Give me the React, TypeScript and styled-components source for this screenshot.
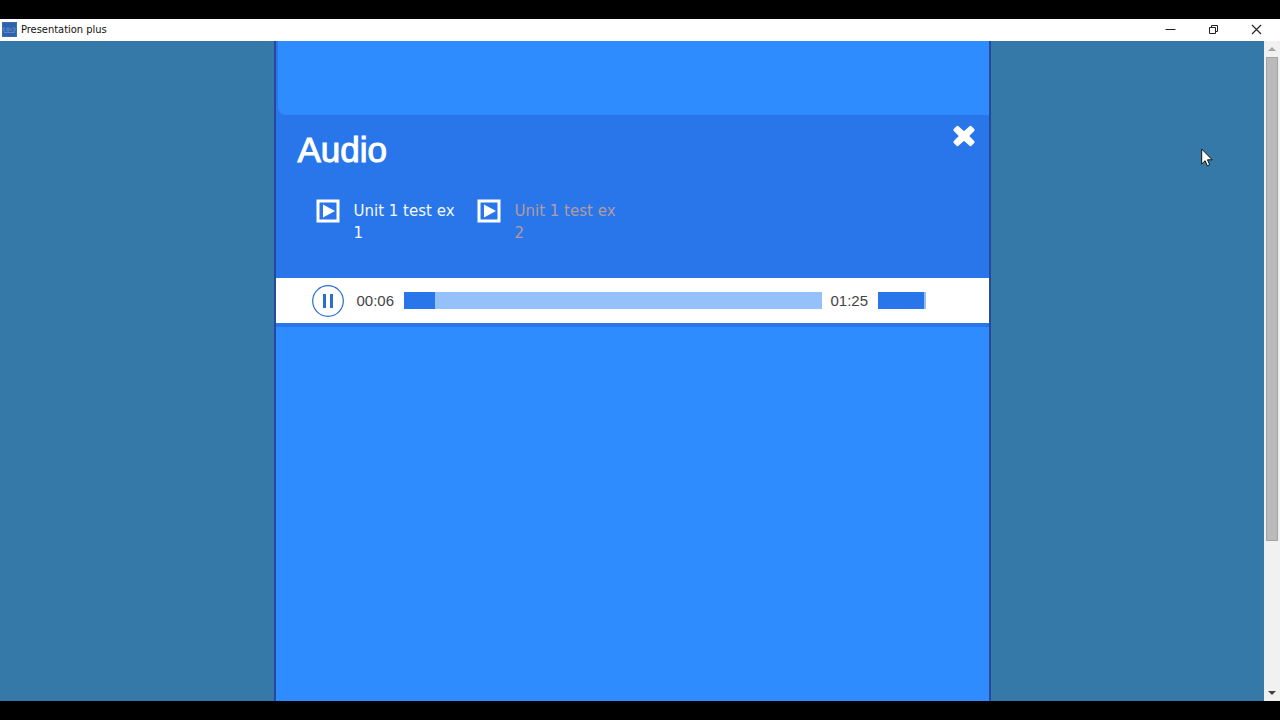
import React, { useState } from "react";
import styled, { createGlobalStyle } from "styled-components";

const GlobalStyle = createGlobalStyle`
  * { box-sizing: border-box; }
  body { margin: 0; background: #000; font-family: "Liberation Sans", Arial, sans-serif; }
  button { border: 0; padding: 0; background: none; color: inherit; font: inherit; cursor: pointer; }
  svg { display: block; }
`;

const Screen = styled.div`
  display: flex;
  flex-direction: column;
  min-height: 100vh;
  padding: 19px 0;
`;

const TitleBar = styled.header`
  display: flex;
  align-items: flex-start;
  height: 22px;
  padding: 0 2px;
  background: #fff;
`;

const AppBadge = styled.svg`
  margin-top: 3px;
`;

const WindowTitle = styled.span`
  flex: 1;
  margin-left: 4px;
  color: #111;
  font: 11px/22px "DejaVu Sans Condensed", "Open Sans", sans-serif;
`;

const WindowButton = styled.button`
  display: grid;
  place-items: center;
  width: 43px;
  height: 20px;
  color: #222;
`;

const Viewport = styled.div`
  display: flex;
  flex: 1;
`;

const Stage = styled.main`
  display: flex;
  flex: 1;
  justify-content: center;
  background: #3579a8;
`;

const Column = styled.div`
  display: flex;
  flex-direction: column;
  width: 717px;
  border: solid #27489f;
  border-width: 0 2px;
  background: #2976eb;
`;

const UpperPage = styled.div`
  height: 74px;
  margin-left: 2px;
  border-bottom-left-radius: 8px;
  background: #2e8cff;
`;

const LowerPage = styled.div`
  flex: 1;
  margin-top: 4px;
  background: #2e8cff;
`;

const AudioPanel = styled.section`
  height: 163px;
  padding: 9px 13px 0 22px;
`;

const PanelHead = styled.div`
  display: flex;
  align-items: flex-start;
  justify-content: space-between;
  height: 76px;
`;

const Heading = styled.h1`
  margin: 5px 0 0;
  color: #fff;
  font-size: 35px;
  font-weight: 400;
  line-height: 42px;
  -webkit-text-stroke: 1px #fff;
`;

const CloseButton = styled.button`
  width: 24px;
  height: 24px;
`;

const TrackList = styled.div`
  display: flex;
  gap: 19px;
  padding-left: 18px;
`;

const TrackButton = styled.button<{ $dim: boolean }>`
  display: flex;
  align-items: flex-start;
  gap: 14px;
  width: 142px;
  color: ${(p) => (p.$dim ? "#b39b9f" : "#f4f9ff")};
  font: 15px/22px "DejaVu Sans", sans-serif;
  text-align: left;
`;

const TrackName = styled.span`
  flex: 1;
`;

const PlayGlyph = styled.svg`
  margin-top: -1px;
`;

const Player = styled.section`
  display: flex;
  align-items: center;
  height: 45px;
  padding: 0 63px 0 36px;
  background: #fff;
`;

const PauseButton = styled.button`
  width: 32px;
  height: 32px;
  margin-right: 13px;
`;

const Time = styled.span`
  width: 47px;
  color: #444;
  font-size: 15px;
  line-height: 20px;
`;

const Slider = styled.input<{ $fill: number }>`
  appearance: none;
  flex: ${(p) => (p.name === "volume" ? "0 0 48px" : "1")};
  min-width: 0;
  height: 17px;
  margin: 0;
  margin-right: ${(p) => (p.name === "volume" ? 0 : 9)}px;
  background: linear-gradient(
    to right,
    #2976eb ${(p) => p.$fill}%,
    #94c1fa ${(p) => p.$fill}%
  );
  cursor: pointer;
  &::-webkit-slider-thumb { appearance: none; width: 1px; height: 17px; opacity: 0; }
`;

const ScrollBar = styled.aside`
  display: flex;
  flex-direction: column;
  width: 16px;
  background: #f1f1f1;
`;

const ScrollArrow = styled.button`
  display: grid;
  place-items: center;
  height: 16px;
`;

const ScrollTrack = styled.div`
  flex: 1;
  padding: 0 2px;
`;

const ScrollThumb = styled.div`
  height: 77%;
  border: 1px solid #a3a3a3;
  background: #bababa;
`;

const Pointer = styled.svg`
  position: absolute;
  top: 148px;
  right: 67px;
  pointer-events: none;
`;

const PlayIcon = () => (
  <PlayGlyph width="24" height="24" viewBox="0 0 24 24">
    <rect x="2" y="2" width="20" height="20" fill="none" stroke="#fff" strokeWidth="3" />
    <path d="M7 5.5v13L19 12z" fill="#fff" />
  </PlayGlyph>
);

const tracks = ["Unit 1 test ex 1", "Unit 1 test ex 2"];

const clock = (s: number) =>
  `${String(Math.floor(s / 60)).padStart(2, "0")}:${String(s % 60).padStart(2, "0")}`;

export default function App() {
  const duration = 85;
  const [position, setPosition] = useState(6.3);
  const [volume, setVolume] = useState(96);
  const [active, setActive] = useState(1);

  return (
    <Screen>
      <GlobalStyle />
      <TitleBar>
        <AppBadge width="15" height="15" viewBox="0 0 15 15">
          <rect width="15" height="15" fill="#2f62ad" />
          <rect x=".5" y=".5" width="14" height="14" fill="none" stroke="#396fac" />
          <path d="M3.5 6h-2v3h2M5 6v3h2V6zM9 6v3M10.500 6h2.500v3h-2.500M2 10.500h11" fill="none" stroke="#6d98d2" strokeWidth=".7" />
        </AppBadge>
        <WindowTitle>Presentation plus</WindowTitle>
        <WindowButton aria-label="Minimize">
          <svg width="11" height="11" viewBox="0 0 11 11">
            <path d="M.5 5.5h10" stroke="currentColor" />
          </svg>
        </WindowButton>
        <WindowButton aria-label="Restore">
          <svg width="11" height="11" viewBox="0 0 11 11" fill="none" stroke="currentColor">
            <path d="M1.5 3.5h6v6h-6zM3.5 3.5v-2h6v6h-2" />
          </svg>
        </WindowButton>
        <WindowButton aria-label="Close window">
          <svg width="11" height="11" viewBox="0 0 11 11">
            <path d="M1 1l9 9M10 1l-9 9" stroke="currentColor" strokeWidth="1.1" />
          </svg>
        </WindowButton>
      </TitleBar>

      <Viewport>
        <Stage>
          <Column>
            <UpperPage />
            <AudioPanel>
              <PanelHead>
                <Heading>Audio</Heading>
                <CloseButton aria-label="Close audio">
                  <svg width="24" height="24" viewBox="0 0 24 24">
                    <path
                      d="M5.500 3.200L12 9L18.500 3.200L21.200 6L15.300 12L21.200 18L18.500 20.800L12 15L5.500 20.800L2.800 18L8.700 12L2.800 6z"
                      fill="#fff"
                      stroke="#fff"
                      strokeWidth="2.800"
                      strokeLinejoin="round"
                    />
                  </svg>
                </CloseButton>
              </PanelHead>
              <TrackList>
                {tracks.map((name, i) => (
                  <TrackButton key={name} $dim={i === active} onClick={() => setActive(i)}>
                    <PlayIcon />
                    <TrackName>{name}</TrackName>
                  </TrackButton>
                ))}
              </TrackList>
            </AudioPanel>
            <Player>
              <PauseButton aria-label="Pause">
                <svg width="32" height="32" viewBox="0 0 32 32">
                  <circle cx="16" cy="16" r="15.3" fill="none" stroke="#2a6fce" strokeWidth="1.2" />
                  <path d="M12.5 9v14M19.5 9v14" stroke="#2a6fce" strokeWidth="3" />
                </svg>
              </PauseButton>
              <Time>{clock(Math.floor(position))}</Time>
              <Slider
                type="range"
                name="position"
                aria-label="Position"
                min={0}
                max={duration}
                step={0.1}
                value={position}
                $fill={(position / duration) * 100}
                onChange={(e) => setPosition(Number(e.target.value))}
              />
              <Time>{clock(duration)}</Time>
              <Slider
                type="range"
                name="volume"
                aria-label="Volume"
                min={0}
                max={100}
                value={volume}
                $fill={volume}
                onChange={(e) => setVolume(Number(e.target.value))}
              />
            </Player>
            <LowerPage />
          </Column>
        </Stage>
        <ScrollBar>
          <ScrollArrow aria-label="Scroll up">
            <svg width="8" height="4" viewBox="0 0 8 4">
              <path d="M0 4L4 0l4 4z" fill="#a3a3a3" />
            </svg>
          </ScrollArrow>
          <ScrollTrack>
            <ScrollThumb />
          </ScrollTrack>
          <ScrollArrow aria-label="Scroll down">
            <svg width="8" height="4" viewBox="0 0 8 4">
              <path d="M0 0h8L4 4z" fill="#404040" />
            </svg>
          </ScrollArrow>
        </ScrollBar>
      </Viewport>

      <Pointer width="12" height="19" viewBox="0 0 12 19">
        <path d="M.7 1v15l3.4-3.3 2.2 5.1 2.4-1-2.2-5h4.7z" fill="#fff" stroke="#111" />
      </Pointer>
    </Screen>
  );
}
